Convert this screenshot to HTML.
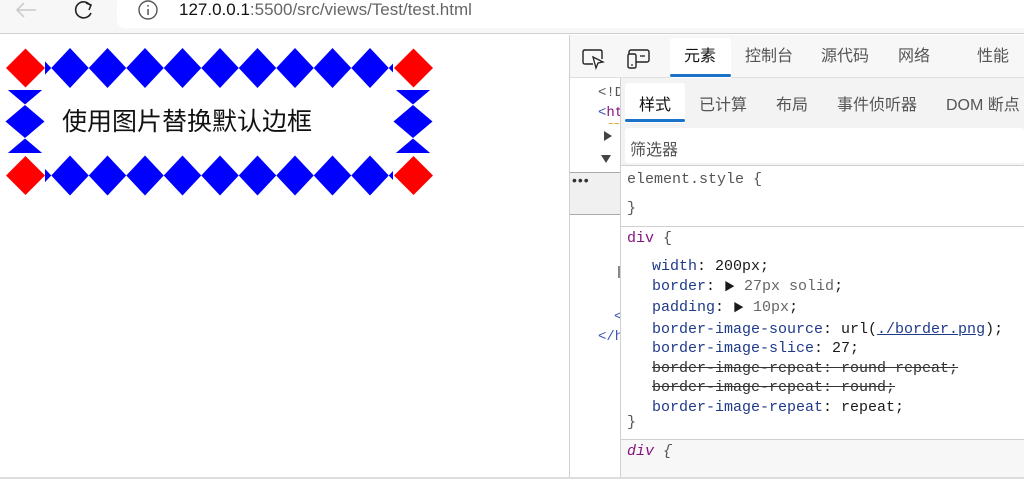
<!DOCTYPE html>
<html><head><meta charset="utf-8"><style>
*{margin:0;padding:0;box-sizing:border-box}
body{width:1024px;height:479px;overflow:hidden;background:#fff;font-family:"Liberation Sans","Noto Sans CJK SC",sans-serif;position:relative}
.abs{position:absolute}
.mono{font-family:"Liberation Mono","Noto Sans CJK SC",monospace;font-size:15px;white-space:pre}
</style></head><body>
<div class="abs" style="left:0;top:0;width:1024px;height:34px;background:#f7f7f7;border-bottom:1px solid #cfcfcf"></div>
<div class="abs" style="left:117px;top:-6px;width:920px;height:34px;background:#fff;border-radius:8px"></div>
<svg class="abs" style="left:0;top:0" width="150" height="30">
<path d="M36 10 H17 M24 3 L17 10 L24 17" stroke="#c8c8c8" stroke-width="1.5" fill="none"/>
<path d="M90 5 A8 8 0 1 0 91 13" stroke="#222" stroke-width="1.6" fill="none"/><path d="M86 3 L91 5 L89 10" stroke="#222" stroke-width="1.6" fill="none"/>
</svg>
<svg class="abs" style="left:138px;top:0" width="22" height="22"><circle cx="10" cy="10" r="9" stroke="#555" stroke-width="1.4" fill="none"/><rect x="9.3" y="9" width="1.5" height="6" fill="#555"/><rect x="9.3" y="5" width="1.5" height="1.6" fill="#555"/></svg>
<div class="abs" style="left:179px;top:0;font-size:17px;color:#666;line-height:20px">
<span style="color:#111">127.0.0.1</span>:5500/src/views/Test/test.html</div>

<svg class="abs" style="left:0;top:0" width="440" height="200">
<defs>
<path id="dh" d="M-18.75 0 L0 -20 L18.75 0 L0 20Z"/>
<path id="dv" d="M-19.5 0 L0 -16.5 L19.5 0 L0 16.5Z"/>
<clipPath id="ct"><rect x="45" y="40" width="348" height="160"/></clipPath>
<clipPath id="cs"><rect x="0" y="90" width="440" height="63"/></clipPath></defs>
<g fill="#0000ff" clip-path="url(#ct)">
<use href="#dh" x="32.5" y="68"/><use href="#dh" x="70" y="68"/><use href="#dh" x="107.5" y="68"/><use href="#dh" x="145" y="68"/><use href="#dh" x="182.5" y="68"/><use href="#dh" x="220" y="68"/><use href="#dh" x="257.5" y="68"/><use href="#dh" x="295" y="68"/><use href="#dh" x="332.5" y="68"/><use href="#dh" x="370" y="68"/><use href="#dh" x="407.5" y="68"/>
<use href="#dh" x="32.5" y="175.5"/><use href="#dh" x="70" y="175.5"/><use href="#dh" x="107.5" y="175.5"/><use href="#dh" x="145" y="175.5"/><use href="#dh" x="182.5" y="175.5"/><use href="#dh" x="220" y="175.5"/><use href="#dh" x="257.5" y="175.5"/><use href="#dh" x="295" y="175.5"/><use href="#dh" x="332.5" y="175.5"/><use href="#dh" x="370" y="175.5"/><use href="#dh" x="407.5" y="175.5"/>
</g>
<g fill="#0000ff" clip-path="url(#cs)">
<use href="#dv" x="25" y="88"/><use href="#dv" x="25" y="121.5"/><use href="#dv" x="25" y="155"/>
<use href="#dv" x="413" y="88"/><use href="#dv" x="413" y="121.5"/><use href="#dv" x="413" y="155"/>
</g>
<g fill="#ff0000">
<path d="M6 68 L25.5 48.5 L45 68 L25.5 87.5Z"/><path d="M394 68 L413.5 48.5 L433 68 L413.5 87.5Z"/>
<path d="M6 175.5 L25.5 156 L45 175.5 L25.5 195Z"/><path d="M394 175.5 L413.5 156 L433 175.5 L413.5 195Z"/>
</g>
</svg>
<div class="abs" style="left:62px;top:107px;font-size:25px;color:#111;line-height:30px">使用图片替换默认边框</div>

<div class="abs" style="left:569px;top:35px;width:455px;height:444px;background:#fff;border-left:1px solid #d0d0d0"></div>
<div class="abs" style="left:570px;top:35px;width:454px;height:43px;background:#f7f7f7;border-bottom:1px solid #e0e0e0"></div>
<svg class="abs" style="left:580px;top:45px" width="60" height="26">
<path d="M4 5 H20 Q22 5 22 7 V14 M13 19 H5 Q3 19 3 17 V7 Q3 5 5 5" stroke="#222" stroke-width="1.4" fill="none"/>
<path d="M13 12 L23 17 L18 18 L16 23Z" stroke="#222" stroke-width="1.3" fill="#fff"/>
</svg>
<svg class="abs" style="left:625px;top:45px" width="30" height="26"><rect x="4" y="5" width="20" height="12" rx="2" stroke="#222" stroke-width="1.4" fill="#f7f7f7"/><rect x="3" y="9" width="8" height="14" rx="1.5" stroke="#222" stroke-width="1.4" fill="#f7f7f7"/><path d="M15 11 H20" stroke="#222" stroke-width="1.3"/><circle cx="7" cy="20" r=".9" fill="#222"/></svg>
<div class="abs" style="left:670px;top:38px;width:61px;height:40px;background:#fff;border-radius:3px 3px 0 0"></div>
<div class="abs" style="left:670px;top:74px;width:61px;height:3px;background:#1a73c8;border-radius:2px"></div>
<div class="abs" style="top:46px;left:684px;font-size:16px;color:#111;line-height:22px">元素</div>
<div class="abs" style="top:46px;left:745px;font-size:16px;color:#555;line-height:22px">控制台</div>
<div class="abs" style="top:46px;left:821px;font-size:16px;color:#555;line-height:22px">源代码</div>
<div class="abs" style="top:46px;left:898px;font-size:16px;color:#555;line-height:22px">网络</div>
<div class="abs" style="top:46px;left:977px;font-size:16px;color:#555;line-height:22px">性能</div>

<div class="abs mono" style="left:598px;top:83px;color:#555;line-height:20px;font-size:14px">&lt;!D</div>
<div class="abs mono" style="left:598px;top:103px;color:#3b55b0;line-height:20px;font-size:14px">&lt;<span style="color:#881280">ht</span></div>
<div class="abs" style="left:608px;top:119px;color:#c80;font-size:10px">~~</div>
<div class="abs" style="left:604px;top:131px;width:0;height:0;border-left:8px solid #444;border-top:5px solid transparent;border-bottom:5px solid transparent"></div>
<div class="abs" style="left:601px;top:155px;width:0;height:0;border-top:8px solid #444;border-left:5px solid transparent;border-right:5px solid transparent"></div>
<div class="abs" style="left:570px;top:172px;width:50px;height:43px;background:#f0f0f0;border-top:1px solid #aaa;border-bottom:1px solid #aaa"></div>
<div class="abs" style="left:572px;top:172px;font-size:14px;color:#333;letter-spacing:1px">•••</div>
<div class="abs" style="left:618px;top:266px;width:2px;height:12px;background:#888"></div>
<div class="abs mono" style="left:614px;top:309px;color:#3b55b0;font-size:14px">&lt;</div>
<div class="abs mono" style="left:598px;top:329px;color:#3b55b0;font-size:14px">&lt;/h</div>

<div class="abs" style="left:620px;top:78px;width:404px;height:401px;background:#fff;border-left:1px solid #d0d0d0"></div>
<div class="abs" style="left:621px;top:78px;width:403px;height:45px;background:#f3f3f3"></div>
<div class="abs" style="left:625px;top:83px;width:60px;height:40px;background:#fff;border-radius:3px 3px 0 0"></div>
<div class="abs" style="left:625px;top:119px;width:60px;height:3px;background:#1a73c8;border-radius:2px"></div>
<div class="abs" style="top:91px;left:639px;font-size:16px;color:#111">样式</div>
<div class="abs" style="top:91px;left:699px;font-size:16px;color:#555">已计算</div>
<div class="abs" style="top:91px;left:776px;font-size:16px;color:#555">布局</div>
<div class="abs" style="top:91px;left:837px;font-size:16px;color:#555">事件侦听器</div>
<div class="abs" style="top:91px;left:946px;font-size:16px;color:#555;white-space:nowrap">DOM 断点</div>
<div class="abs" style="left:621px;top:123px;width:403px;height:42px;background:#f3f3f3"></div>
<div class="abs" style="left:625px;top:128px;width:399px;height:35px;background:#fff;border-radius:3px"></div>
<div class="abs" style="top:136px;left:630px;font-size:16px;color:#555">筛选器</div>
<div class="abs" style="left:621px;top:165px;width:403px;height:1px;background:#d0d0d0"></div>
<div class="abs mono" style="left:627px;top:171px;color:#555">element.style {</div>
<div class="abs mono" style="left:627px;top:200px;color:#555">}</div>
<div class="abs" style="left:621px;top:226px;width:403px;height:1px;background:#d0d0d0"></div>
<div class="abs mono" style="left:627px;top:230px;color:#881280">div <span style="color:#555">{</span></div>
<div class="abs mono" style="left:652px;top:257px;line-height:19.5px;color:#1a1a1a"><span style="color:#1f3a8a">width</span>: 200px;
<span style="color:#1f3a8a">border</span>: <span style="font-size:11px">▶</span> <span style="color:#666">27px solid</span>;
<span style="color:#1f3a8a">padding</span>: <span style="font-size:11px">▶</span> <span style="color:#666">10px</span>;
<span style="color:#1f3a8a">border-image-source</span>: url(<span style="color:#1f3a8a;text-decoration:underline">./border.png</span>);
<span style="color:#1f3a8a">border-image-slice</span>: 27;
<s style="color:#333">border-image-repeat: round repeat;</s>
<s style="color:#333">border-image-repeat: round;</s>
<span style="color:#1f3a8a">border-image-repeat</span>: repeat;</div>
<div class="abs mono" style="left:627px;top:414px;color:#555">}</div>
<div class="abs" style="left:621px;top:439px;width:403px;height:40px;background:#f7f7f7;border-top:1px solid #d0d0d0"></div>
<div class="abs mono" style="left:627px;top:443px;color:#881280;font-style:italic">div <span style="color:#555">{</span></div>
<div class="abs" style="left:0;top:477px;width:1024px;height:2px;background:#ddd"></div>
</body></html>
